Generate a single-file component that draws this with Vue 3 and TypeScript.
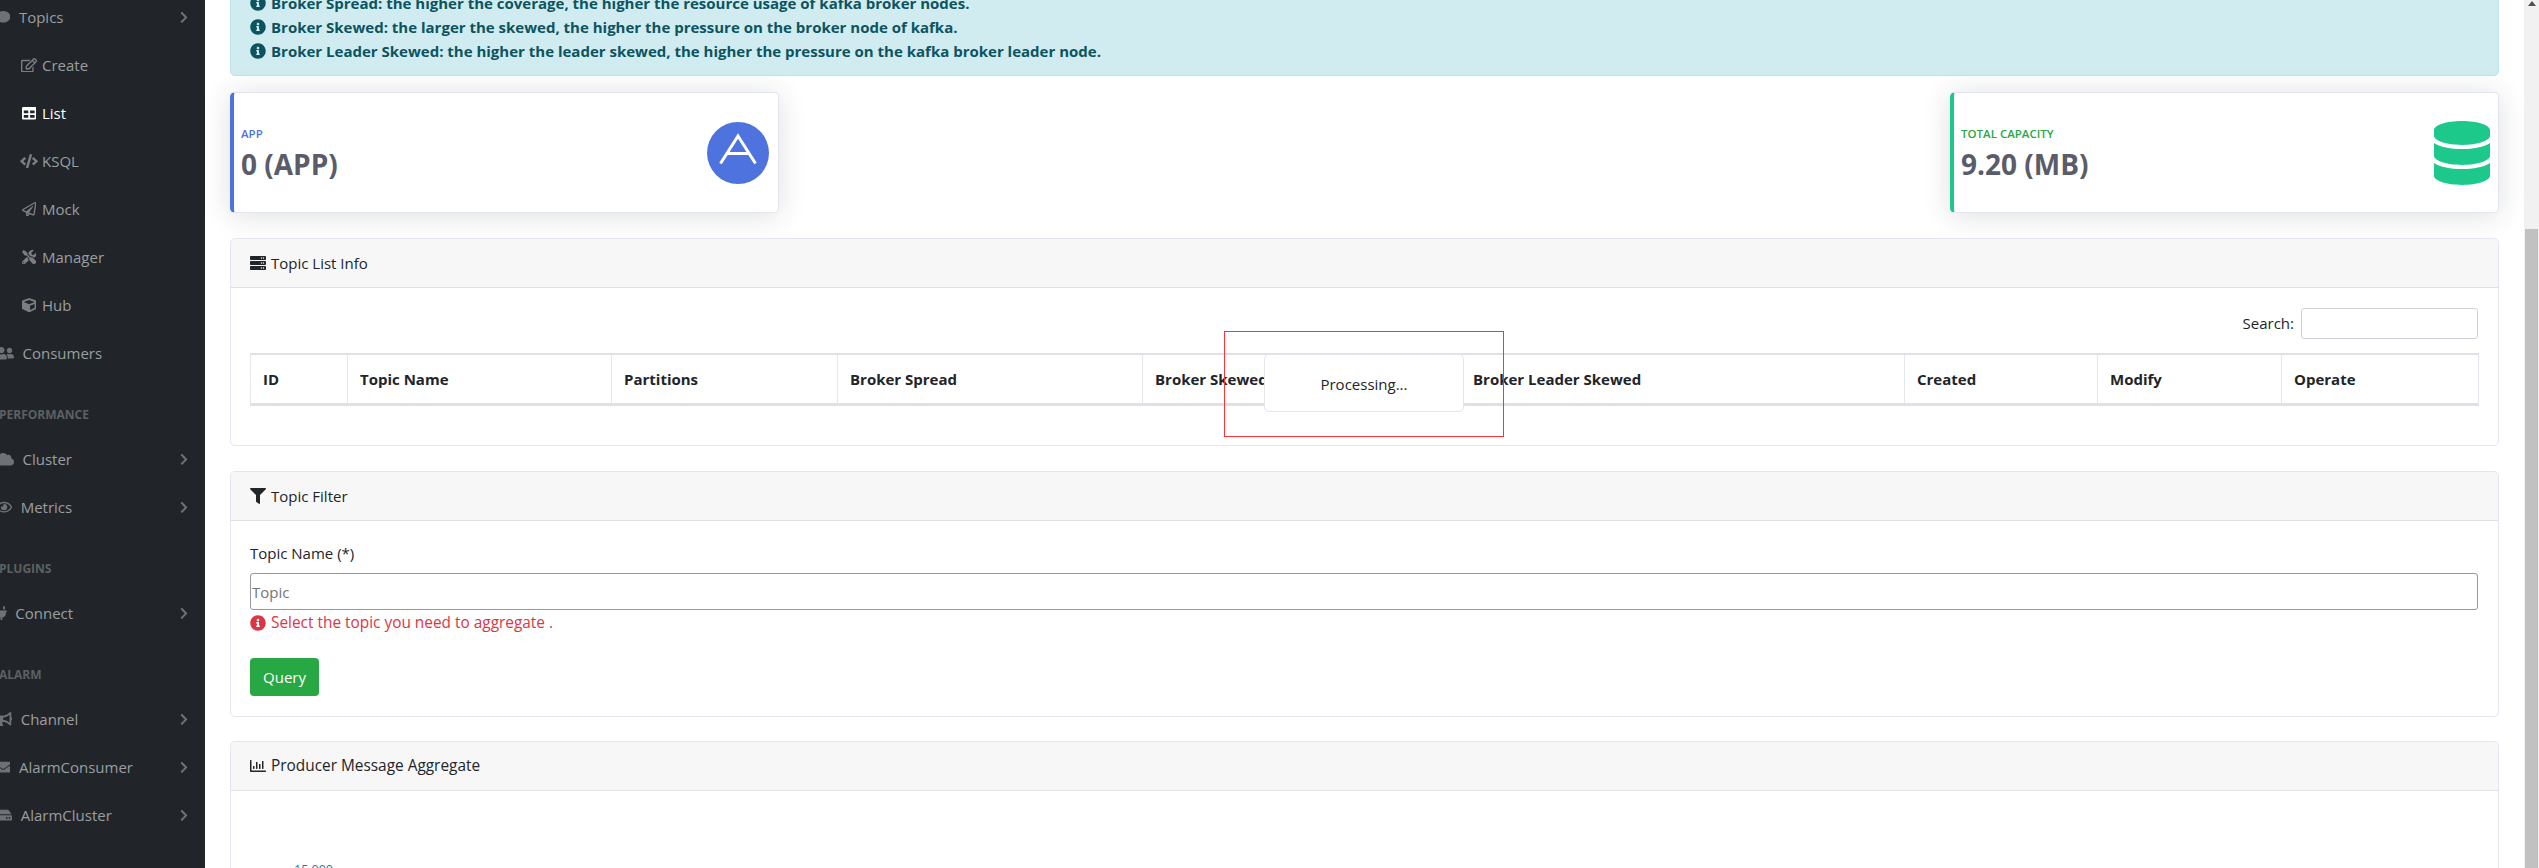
<script setup lang="ts">
interface Icon {
  vb: string;
  d: string;
}

interface NavEntry {
  heading?: string;
  label?: string;
  icon?: string;
  sub?: boolean;
  active?: boolean;
  arrow?: boolean;
}

const icons: Record<string, Icon> = {
  info: { vb: '0 0 512 512', d: 'M256 8C119.043 8 8 119.083 8 256c0 136.997 111.043 248 248 248s248-111.003 248-248C504 119.083 392.957 8 256 8zm0 110c23.196 0 42 18.804 42 42s-18.804 42-42 42-42-18.804-42-42 18.804-42 42-42zm56 254c0 6.627-5.373 12-12 12h-88c-6.627 0-12-5.373-12-12v-24c0-6.627 5.373-12 12-12h12v-64h-12c-6.627 0-12-5.373-12-12v-24c0-6.627 5.373-12 12-12h64c6.627 0 12 5.373 12 12v100h12c6.627 0 12 5.373 12 12v24z' },
  database: { vb: '0 0 448 512', d: 'M448 73.143v45.714C448 159.143 347.667 192 224 192S0 159.143 0 118.857V73.143C0 32.857 100.333 0 224 0s224 32.857 224 73.143zM448 176v102.857C448 319.143 347.667 352 224 352S0 319.143 0 278.857V176c48.125 33.143 136.208 48.572 224 48.572S399.874 209.143 448 176zm0 160v102.857C448 479.143 347.667 512 224 512S0 479.143 0 438.857V336c48.125 33.143 136.208 48.572 224 48.572S399.874 369.143 448 336z' },
  filter: { vb: '0 0 512 512', d: 'M487.976 0H24.028C2.71 0-8.047 25.866 7.058 40.971L192 225.941V432c0 7.831 3.821 15.17 10.237 19.662l80 55.98C298.02 518.69 320 507.493 320 487.98V225.941l184.947-184.97C520.021 25.896 509.338 0 487.976 0z' },
  table: { vb: '0 0 512 512', d: 'M464 32H48C21.49 32 0 53.49 0 80v352c0 26.51 21.49 48 48 48h416c26.51 0 48-21.49 48-48V80c0-26.51-21.49-48-48-48zM224 416H64v-96h160v96zm0-160H64v-96h160v96zm224 160H288v-96h160v96zm0-160H288v-96h160v96z' },
  chevron: { vb: '0 0 320 512', d: 'M285.476 272.971L91.132 467.314c-9.373 9.373-24.569 9.373-33.941 0l-22.667-22.667c-9.357-9.357-9.375-24.522-.04-33.901L188.505 256 34.484 101.255c-9.335-9.379-9.317-24.544.04-33.901l22.667-22.667c9.373-9.373 24.569-9.373 33.941 0L285.475 239.03c9.373 9.372 9.373 24.568.001 33.941z' },
  code: { vb: '0 0 640 512', d: 'M278.9 511.5l-61-17.7c-6.4-1.8-10-8.5-8.2-14.9L346.2 8.7c1.8-6.4 8.5-10 14.9-8.2l61 17.7c6.4 1.8 10 8.5 8.2 14.9L293.8 503.3c-1.9 6.4-8.5 10.1-14.9 8.2zm-114-112.2l43.5-46.4c4.6-4.9 4.3-12.7-.8-17.2L117 256l90.6-79.7c5.1-4.5 5.5-12.3.8-17.2l-43.5-46.4c-4.5-4.8-12.1-5.1-17-.5L3.8 247.2c-5.1 4.7-5.1 12.8 0 17.5l144.1 135.1c4.9 4.6 12.5 4.4 17-.5zm327.2.6l144.1-135.1c5.1-4.7 5.1-12.8 0-17.5L492.1 112.1c-4.8-4.5-12.4-4.3-17 .5L431.6 159c-4.6 4.9-4.3 12.7.8 17.2L523 256l-90.6 79.7c-5.1 4.5-5.5 12.3-.8 17.2l43.5 46.4c4.5 4.9 12.1 5.1 17 .6z' },
  comment: { vb: '0 0 512 512', d: 'M256 32C114.6 32 0 125.1 0 240c0 49.6 21.4 95 57 130.7C44.5 421.1 2.7 466 2.2 466.5c-2.2 2.3-2.8 5.7-1.5 8.7S4.8 480 8 480c66.3 0 116-31.8 140.6-51.4 32.7 12.3 69 19.4 107.4 19.4 141.4 0 256-93.1 256-208S397.4 32 256 32z' },
  cloud: { vb: '0 0 640 512', d: 'M537.6 226.6c4.1-10.7 6.4-22.4 6.4-34.6 0-53-43-96-96-96-19.7 0-38.1 6-53.3 16.2C367 64.2 315.3 32 256 32c-88.4 0-160 71.6-160 160 0 2.7.1 5.4.2 8.1C40.2 219.8 0 273.2 0 336c0 79.5 64.5 144 144 144h368c70.7 0 128-57.3 128-128 0-61.9-44-113.6-102.4-125.4z' },
  eye: { vb: '0 0 576 512', d: 'M288 144a110.94 110.94 0 0 0-31.24 5 55.4 55.4 0 0 1 7.24 27 56 56 0 0 1-56 56 55.4 55.4 0 0 1-27-7.24A111.71 111.71 0 1 0 288 144zm284.52 97.4C518.29 135.59 410.93 64 288 64S57.68 135.64 3.48 241.41a32.35 32.35 0 0 0 0 29.19C57.71 376.41 165.07 448 288 448s230.32-71.64 284.52-177.41a32.35 32.35 0 0 0 0-29.19zM288 400c-98.65 0-189.09-55-237.93-144C98.91 167 189.34 112 288 112s189.09 55 237.93 144C477.1 345 386.66 400 288 400z' },
  friends: { vb: '0 0 640 512', d: 'M192 256c61.9 0 112-50.1 112-112S253.9 32 192 32 80 82.1 80 144s50.1 112 112 112zm76.8 32h-8.3c-20.8 10-43.9 16-68.5 16s-47.6-6-68.5-16h-8.3C51.6 288 0 339.6 0 403.2V432c0 26.5 21.5 48 48 48h288c26.5 0 48-21.5 48-48v-28.8c0-63.6-51.6-115.2-115.2-115.2zM480 256c53 0 96-43 96-96s-43-96-96-96-96 43-96 96 43 96 96 96zm48 32h-3.8c-13.9 4.8-28.6 8-44.2 8s-30.3-3.2-44.2-8H432c-20.4 0-39.2 5.9-55.7 15.4 24.4 26.3 39.7 61.2 39.7 99.8v38.4c0 2.2-.5 4.3-.6 6.4H592c26.5 0 48-21.5 48-48 0-61.9-50.1-112-112-112z' },
  plug: { vb: '0 0 384 512', d: 'M320,32a32,32,0,0,0-64,0v96h64Zm48,128H16A16,16,0,0,0,0,176v32a16,16,0,0,0,16,16H32v32A160.07,160.07,0,0,0,160,412.8V512h64V412.8A160.07,160.07,0,0,0,352,256V224h16a16,16,0,0,0,16-16V176A16,16,0,0,0,368,160ZM128,32a32,32,0,0,0-64,0v96h64Z' },
  plane: { vb: '0 0 512 512', d: 'M440 6.5L24 246.4c-34.4 19.9-31.1 70.8 5.7 85.9L144 379.6V464c0 46.4 59.2 65.5 86.6 28.6l43.8-59.1 111.9 46.2c5.9 2.4 12.1 3.6 18.3 3.6 8.2 0 16.3-2.1 23.6-6.2 12.8-7.2 21.6-20 23.9-34.5l59.4-387.2c6.1-40.1-36.9-68.8-71.5-48.9zM192 464v-64.6l36.6 15.1L192 464zm212.6-28.7l-153.8-63.5L391 169.5c10.7-15.5-9.5-33.5-23.7-21.2L155.8 332.6 48 288 464 48l-59.4 387.3z' },
  tools: { vb: '0 0 512 512', d: 'M501.1 395.7L384 278.6c-23.1-23.1-57.6-27.6-85.4-13.9L192 158.1V96L64 0 0 64l96 128h62.1l106.6 106.6c-13.6 27.8-9.2 62.3 13.9 85.4l117.1 117.1c14.6 14.6 38.2 14.6 52.7 0l52.7-52.7c14.5-14.6 14.5-38.2 0-52.7zM331.7 225c28.3 0 54.9 11 74.9 31l19.4 19.4c15.8-6.9 30.8-16.5 43.8-29.5 37.1-37.1 49.7-89.3 37.9-136.7-2.2-9-13.5-12.1-20.1-5.5l-74.4 74.4-67.9-11.3L334 98.9l74.4-74.4c6.6-6.6 3.4-17.9-5.7-20.2-47.4-11.7-99.6.9-136.6 37.9-28.5 28.5-41.9 66.1-41.2 103.6l82.1 82.1c8.1-1.9 16.5-2.9 24.7-2.9zm-103.9 82l-56.7-56.7L18.7 402.8c-25 25-25 65.5 0 90.5s65.5 25 90.5 0l123.6-123.6c-7.6-19.9-9.9-41.6-5-62.7zM64 472c-13.2 0-24-10.8-24-24 0-13.3 10.7-24 24-24s24 10.7 24 24c0 13.2-10.7 24-24 24z' },
  edit: { vb: '0 0 576 512', d: 'M402.3 344.9l32-32c5-5 13.7-1.5 13.7 5.7V464c0 26.5-21.5 48-48 48H48c-26.5 0-48-21.5-48-48V112c0-26.5 21.5-48 48-48h273.5c7.1 0 10.7 8.6 5.7 13.7l-32 32c-1.5 1.5-3.5 2.3-5.7 2.3H48v352h352V350.5c0-2.1.8-4.1 2.3-5.6zm156.6-201.8L296.3 405.7l-90.4 10c-26.2 2.9-48.5-19.2-45.6-45.6l10-90.4L432.9 17.1c22.9-22.9 59.9-22.9 82.7 0l43.2 43.2c22.9 22.9 22.9 60 .1 82.8zM460.1 174L402 115.9 216.2 301.8l-7.3 65.3 65.3-7.3L460.1 174zm64.8-79.7l-43.2-43.2c-4.1-4.1-10.8-4.1-14.8 0L436 82l58.1 58.1 30.9-30.9c4-4.2 4-10.8-.1-14.9z' },
  cube: { vb: '0 0 512 512', d: 'M239.1 6.3l-208 78c-18.7 7-31.1 25-31.1 45v225.1c0 18.2 10.3 34.8 26.5 42.9l208 104c13.5 6.8 29.4 6.8 42.9 0l208-104c16.3-8.1 26.5-24.8 26.5-42.9V129.3c0-20-12.4-37.9-31.1-44.9l-208-78C262 2.2 250 2.2 239.1 6.3zM256 68.4l192 72v1.1l-192 78-192-78v-1.1l192-72zm32 356V275.5l160-65v133.9l-160 80z' },
  bullhorn: { vb: '0 0 576 512', d: 'M576 240c0-23.63-12.95-44.04-32-55.12V32.01C544 23.26 537.02 0 512 0c-7.12 0-14.19 2.38-19.98 7.02l-85.03 68.03C364.28 109.19 310.66 128 256 128H64c-35.35 0-64 28.65-64 64v96c0 35.35 28.65 64 64 64h33.7c-1.39 10.48-2.18 21.14-2.18 32 0 39.77 9.26 77.35 25.56 110.94 5.19 10.69 16.52 17.06 28.4 17.06h74.28c26.05 0 41.69-29.84 25.9-50.56-16.4-21.52-26.15-48.36-26.15-77.44 0-11.11 1.62-21.79 4.41-32H256c54.66 0 108.28 18.81 150.98 52.95l85.03 68.03a32.023 32.023 0 0 0 19.98 7.02c24.92 0 32-22.78 32-32V295.13C563.05 284.04 576 263.63 576 240zm-96 141.42l-33.05-26.44C392.95 311.78 325.12 288 256 288v-96c69.12 0 136.95-23.78 190.95-66.98L480 98.58v282.84z' },
  envelope: { vb: '0 0 512 512', d: 'M502.3 190.8c3.9-3.1 9.7-.2 9.7 4.7V400c0 26.5-21.5 48-48 48H48c-26.5 0-48-21.5-48-48V195.6c0-5 5.7-7.8 9.7-4.7 22.4 17.4 52.1 39.5 154.1 113.6 21.1 15.4 56.7 47.8 92.2 47.6 35.7.3 72-32.8 92.3-47.6 102-74.1 131.6-96.3 154-113.7zM256 320c23.2.4 56.6-29.2 73.4-41.4 132.7-96.3 142.8-104.7 173.4-128.7 5.8-4.5 9.2-11.5 9.2-18.9v-19c0-26.5-21.5-48-48-48H48C21.5 64 0 85.5 0 112v19c0 7.4 3.4 14.3 9.2 18.9 30.6 23.9 40.7 32.4 173.4 128.7 16.8 12.2 50.2 41.8 73.4 41.4z' },
  hdd: { vb: '0 0 576 512', d: 'M576 304v96c0 26.51-21.49 48-48 48H48c-26.51 0-48-21.49-48-48v-96c0-26.51 21.49-48 48-48h480c26.51 0 48 21.49 48 48zm-48-80a79.557 79.557 0 0 1 30.777 6.165L462.25 85.374A48.003 48.003 0 0 0 422.311 64H153.689a48 48 0 0 0-39.938 21.374L17.223 230.165A79.557 79.557 0 0 1 48 224h480zm-48 96c-17.673 0-32 14.327-32 32s14.327 32 32 32 32-14.327 32-32-14.327-32-32-32zm-96 0c-17.673 0-32 14.327-32 32s14.327 32 32 32 32-14.327 32-32-14.327-32-32-32z' },
  server: { vb: '0 0 512 512', d: 'M480 160H32c-17.673 0-32-14.327-32-32V64c0-17.673 14.327-32 32-32h448c17.673 0 32 14.327 32 32v64c0 17.673-14.327 32-32 32zm-48-88c-13.255 0-24 10.745-24 24s10.745 24 24 24 24-10.745 24-24-10.745-24-24-24zm-64 0c-13.255 0-24 10.745-24 24s10.745 24 24 24 24-10.745 24-24-10.745-24-24-24zm112 248H32c-17.673 0-32-14.327-32-32v-64c0-17.673 14.327-32 32-32h448c17.673 0 32 14.327 32 32v64c0 17.673-14.327 32-32 32zm-48-88c-13.255 0-24 10.745-24 24s10.745 24 24 24 24-10.745 24-24-10.745-24-24-24zm-64 0c-13.255 0-24 10.745-24 24s10.745 24 24 24 24-10.745 24-24-10.745-24-24-24zm112 248H32c-17.673 0-32-14.327-32-32v-64c0-17.673 14.327-32 32-32h448c17.673 0 32 14.327 32 32v64c0 17.673-14.327 32-32 32zm-48-88c-13.255 0-24 10.745-24 24s10.745 24 24 24 24-10.745 24-24-10.745-24-24-24zm-64 0c-13.255 0-24 10.745-24 24s10.745 24 24 24 24-10.745 24-24-10.745-24-24-24z' },
  chart: { vb: '0 0 512 512', d: 'M396.8 352h22.4c6.4 0 12.8-6.4 12.8-12.8V108.8c0-6.4-6.4-12.8-12.8-12.8h-22.4c-6.4 0-12.8 6.4-12.8 12.8v230.4c0 6.4 6.4 12.8 12.8 12.8zm-192 0h22.4c6.4 0 12.8-6.4 12.8-12.8V140.8c0-6.4-6.4-12.8-12.8-12.8h-22.4c-6.4 0-12.8 6.4-12.8 12.8v198.4c0 6.4 6.4 12.8 12.8 12.8zm96 0h22.4c6.4 0 12.8-6.4 12.8-12.8V204.8c0-6.4-6.4-12.8-12.8-12.8h-22.4c-6.4 0-12.8 6.4-12.8 12.8v134.4c0 6.4 6.4 12.8 12.8 12.8zM496 400H48V80c0-8.84-7.16-16-16-16H16C7.16 64 0 71.16 0 80v336c0 17.67 14.33 32 32 32h464c8.84 0 16-7.16 16-16v-16c0-8.84-7.16-16-16-16zm-387.2-48h22.4c6.4 0 12.8-6.4 12.8-12.8v-70.4c0-6.4-6.4-12.8-12.8-12.8h-22.4c-6.4 0-12.8 6.4-12.8 12.8v70.4c0 6.4 6.4 12.8 12.8 12.8z' },
};

const nav: NavEntry[] = [
  { label: 'Topics', icon: 'comment', arrow: true },
  { label: 'Create', icon: 'edit', sub: true },
  { label: 'List', icon: 'table', sub: true, active: true },
  { label: 'KSQL', icon: 'code', sub: true },
  { label: 'Mock', icon: 'plane', sub: true },
  { label: 'Manager', icon: 'tools', sub: true },
  { label: 'Hub', icon: 'cube', sub: true },
  { label: 'Consumers', icon: 'friends' },
  { heading: 'Performance' },
  { label: 'Cluster', icon: 'cloud', arrow: true },
  { label: 'Metrics', icon: 'eye', arrow: true },
  { heading: 'Plugins' },
  { label: 'Connect', icon: 'plug', arrow: true },
  { heading: 'Alarm' },
  { label: 'Channel', icon: 'bullhorn', arrow: true },
  { label: 'AlarmConsumer', icon: 'envelope', arrow: true },
  { label: 'AlarmCluster', icon: 'hdd', arrow: true },
];

const notes: string[] = [
  'Broker Spread: the higher the coverage, the higher the resource usage of kafka broker nodes.',
  'Broker Skewed: the larger the skewed, the higher the pressure on the broker node of kafka.',
  'Broker Leader Skewed: the higher the leader skewed, the higher the pressure on the kafka broker leader node.',
];

const columns = [
  { title: 'ID', width: 97 },
  { title: 'Topic Name', width: 264 },
  { title: 'Partitions', width: 226 },
  { title: 'Broker Spread', width: 305 },
  { title: 'Broker Skewed', width: 318 },
  { title: 'Broker Leader Skewed', width: 444 },
  { title: 'Created', width: 193 },
  { title: 'Modify', width: 184 },
  { title: 'Operate', width: 197 },
];

// icons are 14.4px tall, width follows the glyph's own box
const iconWidth = (name: string): string => {
  const w = parseInt(icons[name].vb.split(' ')[2]);
  return (w / 512) * 14.4 + 'px';
};
</script>

<template>
  <div class="page">
    <aside class="sidebar">
      <div class="sidebar__nav">
        <template v-for="item in nav" :key="item.label ?? item.heading">
          <div v-if="item.heading" class="sidebar__heading">{{ item.heading }}</div>
          <a
            v-else
            class="sidebar__link"
            :class="{ 'sidebar__link--sub': item.sub, 'sidebar__link--active': item.active }"
          >
            <span class="sidebar__icon">
              <svg :viewBox="icons[item.icon!].vb" :style="{ width: iconWidth(item.icon!) }">
                <path :d="icons[item.icon!].d" />
              </svg>
            </span>
            <span class="sidebar__label">{{ item.label }}</span>
            <svg v-if="item.arrow" class="sidebar__arrow" :viewBox="icons.chevron.vb">
              <path :d="icons.chevron.d" />
            </svg>
          </a>
        </template>
      </div>
    </aside>

    <main class="content">
      <div class="alert">
        <p v-for="note in notes" :key="note" class="alert__line">
          <svg class="ico" :viewBox="icons.info.vb"><path :d="icons.info.d" /></svg>
          {{ note }}
        </p>
      </div>

      <div class="stats">
        <div class="stat stat--blue">
          <div class="stat__text">
            <div class="stat__label">APP</div>
            <div class="stat__value">0 (APP)</div>
          </div>
          <svg class="stat__icon" viewBox="0 0 64 64">
            <circle cx="32" cy="32" r="31" fill="#4e73df" />
            <path d="M14.5 42.5 L32 15 L49.5 42.5 M21 32.5 H43" fill="none" stroke="#fff" stroke-width="3" />
          </svg>
        </div>
        <div class="stat stat--green">
          <div class="stat__text">
            <div class="stat__label">TOTAL CAPACITY</div>
            <div class="stat__value">9.20 (MB)</div>
          </div>
          <svg class="stat__icon stat__icon--db" :viewBox="icons.database.vb"><path :d="icons.database.d" /></svg>
        </div>
      </div>

      <section class="panel">
        <header class="panel__head">
          <svg class="ico" :viewBox="icons.server.vb"><path :d="icons.server.d" /></svg>
          Topic List Info
        </header>
        <div class="panel__body panel__body--list">
          <div class="search">
            <label class="search__label">Search:</label>
            <input class="search__input" type="search" />
          </div>
          <div class="table-wrap">
            <table class="grid">
              <colgroup>
                <col v-for="c in columns" :key="c.title" :style="{ width: c.width + 'px' }" />
              </colgroup>
              <thead>
                <tr>
                  <th v-for="c in columns" :key="c.title">{{ c.title }}</th>
                </tr>
              </thead>
            </table>
            <div class="processing">Processing...</div>
            <div class="marker" />
          </div>
        </div>
      </section>

      <section class="panel">
        <header class="panel__head">
          <svg class="ico" :viewBox="icons.filter.vb"><path :d="icons.filter.d" /></svg>
          Topic Filter
        </header>
        <div class="panel__body">
          <label class="field__label">Topic Name (*)</label>
          <input class="field__input" type="text" placeholder="Topic" />
          <div class="field__error">
            <svg class="ico" :viewBox="icons.info.vb"><path :d="icons.info.d" /></svg>
            Select the topic you need to aggregate .
          </div>
          <button class="btn" type="button">Query</button>
        </div>
      </section>

      <section class="panel panel--chart">
        <header class="panel__head">
          <svg class="ico" :viewBox="icons.chart.vb"><path :d="icons.chart.d" /></svg>
          Producer Message Aggregate
        </header>
        <div class="chart">
          <span class="chart__tick">15,000</span>
        </div>
      </section>
    </main>

    <div class="scrollbar">
      <span class="scrollbar__up" />
      <div class="scrollbar__thumb" />
    </div>
  </div>
</template>

<style scoped>
.page {
  display: flex;
  width: 2539px;
  height: 868px;
  overflow: hidden;
  background: #fff;
  color: #212529;
  font-family: "Open Sans", "Noto Sans", sans-serif;
  font-size: 15px;
  line-height: 24px;
}

.sidebar {
  flex: 0 0 205px;
  background: #212529;
  color: #9a9ea1;
  overflow: hidden;
}

.sidebar__nav {
  margin-top: -7px;
}

.sidebar__link {
  display: flex;
  align-items: center;
  height: 48px;
  gap: 8.5px;
}

.sidebar__icon {
  display: flex;
  align-items: center;
  justify-content: center;
  margin-left: -4px;
  color: #6f7275;
}

.sidebar__icon svg {
  height: 14.4px;
  display: block;
  fill: currentColor;
}

.sidebar__link--sub {
  padding-left: 20px;
  gap: 4px;
}

.sidebar__link--sub .sidebar__icon {
  width: 18px;
  margin-left: 0;
  color: #7c7f82;
}

.sidebar__link--active {
  color: #fff;
}

.sidebar__link--active .sidebar__icon {
  color: #fff;
}

.sidebar__arrow {
  width: 8px;
  height: 12.8px;
  margin-left: auto;
  margin-right: 17.5px;
  fill: #6f7275;
}

.sidebar__heading {
  height: 58px;
  padding-top: 29px;
  box-sizing: border-box;
  margin-left: -1px;
  font-size: 12px;
  line-height: 17px;
  font-weight: 700;
  text-transform: uppercase;
  color: #5d6063;
}

.content {
  flex: 1;
  min-width: 0;
  padding: 0 25px;
  margin-top: -22px;
  display: flex;
  flex-direction: column;
  gap: 25px;
}

.ico {
  width: 16px;
  height: 16px;
  fill: currentColor;
  flex: none;
}

.alert {
  background: #d1ecf1;
  border: 1px solid #bee5eb;
  border-radius: 5px;
  padding: 12px 20px 12px 19px;
  color: #0c5460;
  font-weight: 700;
  margin-bottom: -9px;
}

.alert__line {
  margin: 0;
  display: flex;
  align-items: center;
  gap: 5px;
}

.stats {
  display: grid;
  grid-template-columns: 549px 1fr 1fr 549px;
  column-gap: 25px;
}

.stat {
  height: 121px;
  box-sizing: border-box;
  display: flex;
  align-items: center;
  justify-content: space-between;
  padding: 0 8px 0 7px;
  background: #fff;
  border: 1px solid #e3e6f0;
  border-left-width: 4px;
  border-radius: 5px;
  box-shadow: 0 2.4px 28px rgba(33, 40, 50, 0.15);
}

.stat--blue {
  border-left-color: #4e73df;
}

.stat--green {
  grid-column: 4;
  border-left-color: #1cc88a;
}

.stat__text {
  padding-top: 1px;
}

.stat__label {
  font-size: 11.5px;
  line-height: 18px;
  font-weight: 600;
  color: #4e73df;
}

.stat--green .stat__label {
  color: #28a745;
}

.stat__value {
  font-size: 28px;
  line-height: 36px;
  font-weight: 700;
  color: #5a5c69;
  margin-top: 3px;
}

.stat__icon {
  width: 64px;
  height: 64px;
}

.stat__icon--db {
  width: 56px;
  fill: #1cc88a;
}

.panel {
  border: 1px solid #e3e6f0;
  border-radius: 5px;
  background: #fff;
}

.panel--chart {
  margin-top: -1px;
}

.panel--chart .panel__head {
  font-size: 15.4px;
}

.panel__head {
  height: 49px;
  box-sizing: border-box;
  display: flex;
  align-items: center;
  gap: 5px;
  padding: 0 19px;
  background: #f7f7f7;
  border-bottom: 1px solid #dfe1e6;
  border-radius: 5px 5px 0 0;
}

.panel__body {
  padding: 20px 20px 20px 19px;
}

.panel__body--list {
  padding-bottom: 39px;
}

.search {
  display: flex;
  justify-content: flex-end;
  align-items: center;
  gap: 7px;
  margin-bottom: 14px;
}

.search__label {
  padding-bottom: 2px;
}

.search__input {
  width: 177px;
  height: 31px;
  box-sizing: border-box;
  border: 1px solid #ced4da;
  border-radius: 3px;
}

.table-wrap {
  position: relative;
}

.grid {
  width: 2228px;
  table-layout: fixed;
  border-collapse: collapse;
}

.grid th {
  height: 48px;
  padding: 0 12px;
  text-align: left;
  font-weight: 700;
  white-space: nowrap;
  border: 1px solid #e3e6ec;
  border-top: 2px solid #dee2e6;
  border-bottom: 3px solid #dee2e6;
}

.processing {
  position: absolute;
  left: 1014px;
  top: 1px;
  width: 200px;
  height: 58px;
  box-sizing: border-box;
  padding-top: 17px;
  text-align: center;
  font-size: 15px;
  background: #fff;
  border: 1px solid #e3e6f0;
  border-radius: 5px;
}

.marker {
  position: absolute;
  left: 974px;
  top: -22px;
  width: 280px;
  height: 106px;
  box-sizing: border-box;
  border: 1px solid #f33;
}

.field__label {
  display: block;
  margin-bottom: 8px;
}

.field__input {
  display: block;
  width: 100%;
  height: 37px;
  box-sizing: border-box;
  padding: 0 1px;
  border: 1px solid #999;
  border-radius: 3px;
  font: inherit;
  outline: none;
}

.field__input::placeholder {
  color: #757575;
}

.field__error {
  display: flex;
  align-items: center;
  gap: 5px;
  margin-top: 1px;
  color: #dc3545;
  font-size: 15.4px;
}

.btn {
  display: block;
  margin-top: 23px;
  width: 69px;
  height: 38px;
  padding: 0;
  border: 0;
  border-radius: 4px;
  background: #28a745;
  color: #fff;
  font: inherit;
}

.chart {
  padding: 72px 0 0 63px;
}

.chart__tick {
  display: block;
  font-size: 12.5px;
  line-height: 14px;
  color: #1f77b4;
}

.scrollbar {
  flex: 0 0 15px;
  background: #f1f1f1;
  display: flex;
  flex-direction: column;
  align-items: center;
  padding-top: 1px;
}

.scrollbar__up {
  width: 0;
  height: 0;
  border-left: 4px solid transparent;
  border-right: 4px solid transparent;
  border-bottom: 5px solid #505050;
}

.scrollbar__thumb {
  width: 13px;
  flex: 1;
  margin-top: 223px;
  background: #c1c1c1;
}
</style>

<style>
html,
body {
  margin: 0;
  overflow: hidden;
}
</style>
